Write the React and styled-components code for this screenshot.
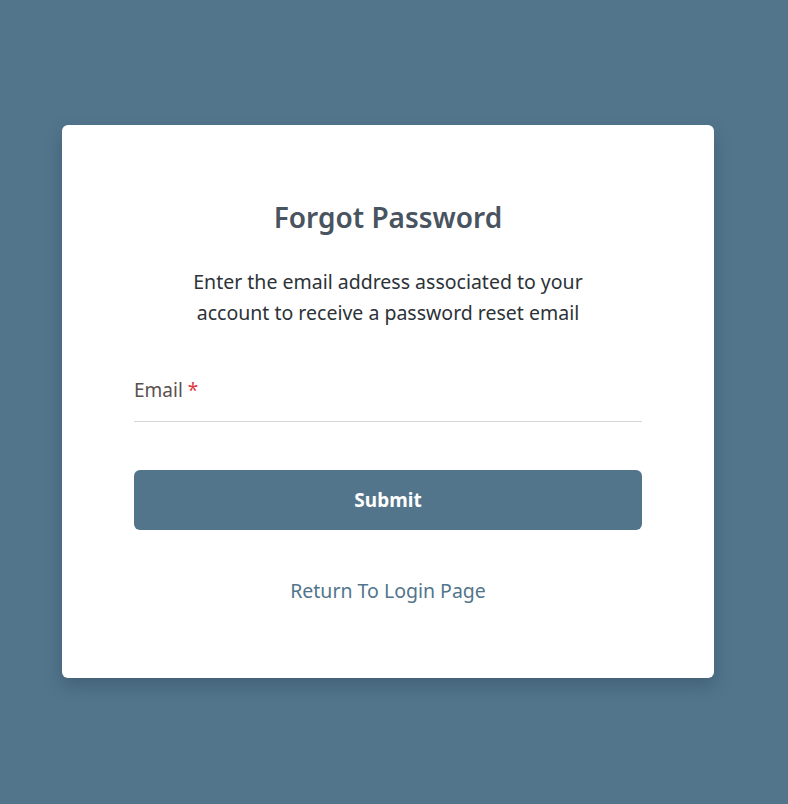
import styled, { createGlobalStyle } from 'styled-components'

const GlobalStyle = createGlobalStyle`
  html, body {
    margin: 0;
    padding: 0;
    background: #52758c;
    font-family: 'Noto Sans', 'Open Sans', sans-serif;
  }
`

const Page = styled.div`
  min-height: 804px;
  padding: 125px 74px 0 62px;
  box-sizing: border-box;
`

const Card = styled.form`
  width: 652px;
  height: 553px;
  box-sizing: border-box;
  background: #fff;
  border-radius: 6px;
  box-shadow: 0 8px 16px rgba(40, 60, 80, 0.35);
  padding: 74px 72px 0 72px;
  display: flex;
  flex-direction: column;
  align-items: center;
`

const Title = styled.h1`
  margin: 0;
  font-size: 28px;
  font-weight: 600;
  line-height: 36px;
  color: #48545f;
`

const Description = styled.p`
  margin: 31px 0 0 0;
  font-size: 19.5px;
  line-height: 31px;
  color: #2c3237;
  text-align: center;
  max-width: 420px;
`

const Field = styled.label`
  align-self: stretch;
  margin-top: 50px;
  display: block;
  border-bottom: 1px solid #d6d6d6;
  padding-bottom: 19px;
`

const Label = styled.span`
  font-size: 19px;
  line-height: 24px;
  color: #5a5050;
`

const Required = styled.span`
  color: #e0383e;
  margin-left: 5px;
`

const Button = styled.button`
  align-self: stretch;
  margin-top: 48px;
  height: 60px;
  border: none;
  border-radius: 6px;
  background: #52758c;
  color: #fff;
  font-family: inherit;
  font-size: 19px;
  font-weight: 700;
  cursor: pointer;
`

const BackLink = styled.a`
  margin-top: 48px;
  font-size: 19.5px;
  line-height: 26px;
  color: #52758c;
  text-decoration: none;
  cursor: pointer;
`

const App = () => {
  return (
    <>
      <GlobalStyle />
      <Page>
        <Card onSubmit={(e) => e.preventDefault()}>
          <Title>Forgot Password</Title>
          <Description>Enter the email address associated to your account to receive a password reset email</Description>
          <Field>
            <Label>
              Email<Required>*</Required>
            </Label>
          </Field>
          <Button type='submit'>Submit</Button>
          <BackLink>Return To Login Page</BackLink>
        </Card>
      </Page>
    </>
  )
}

export default App
